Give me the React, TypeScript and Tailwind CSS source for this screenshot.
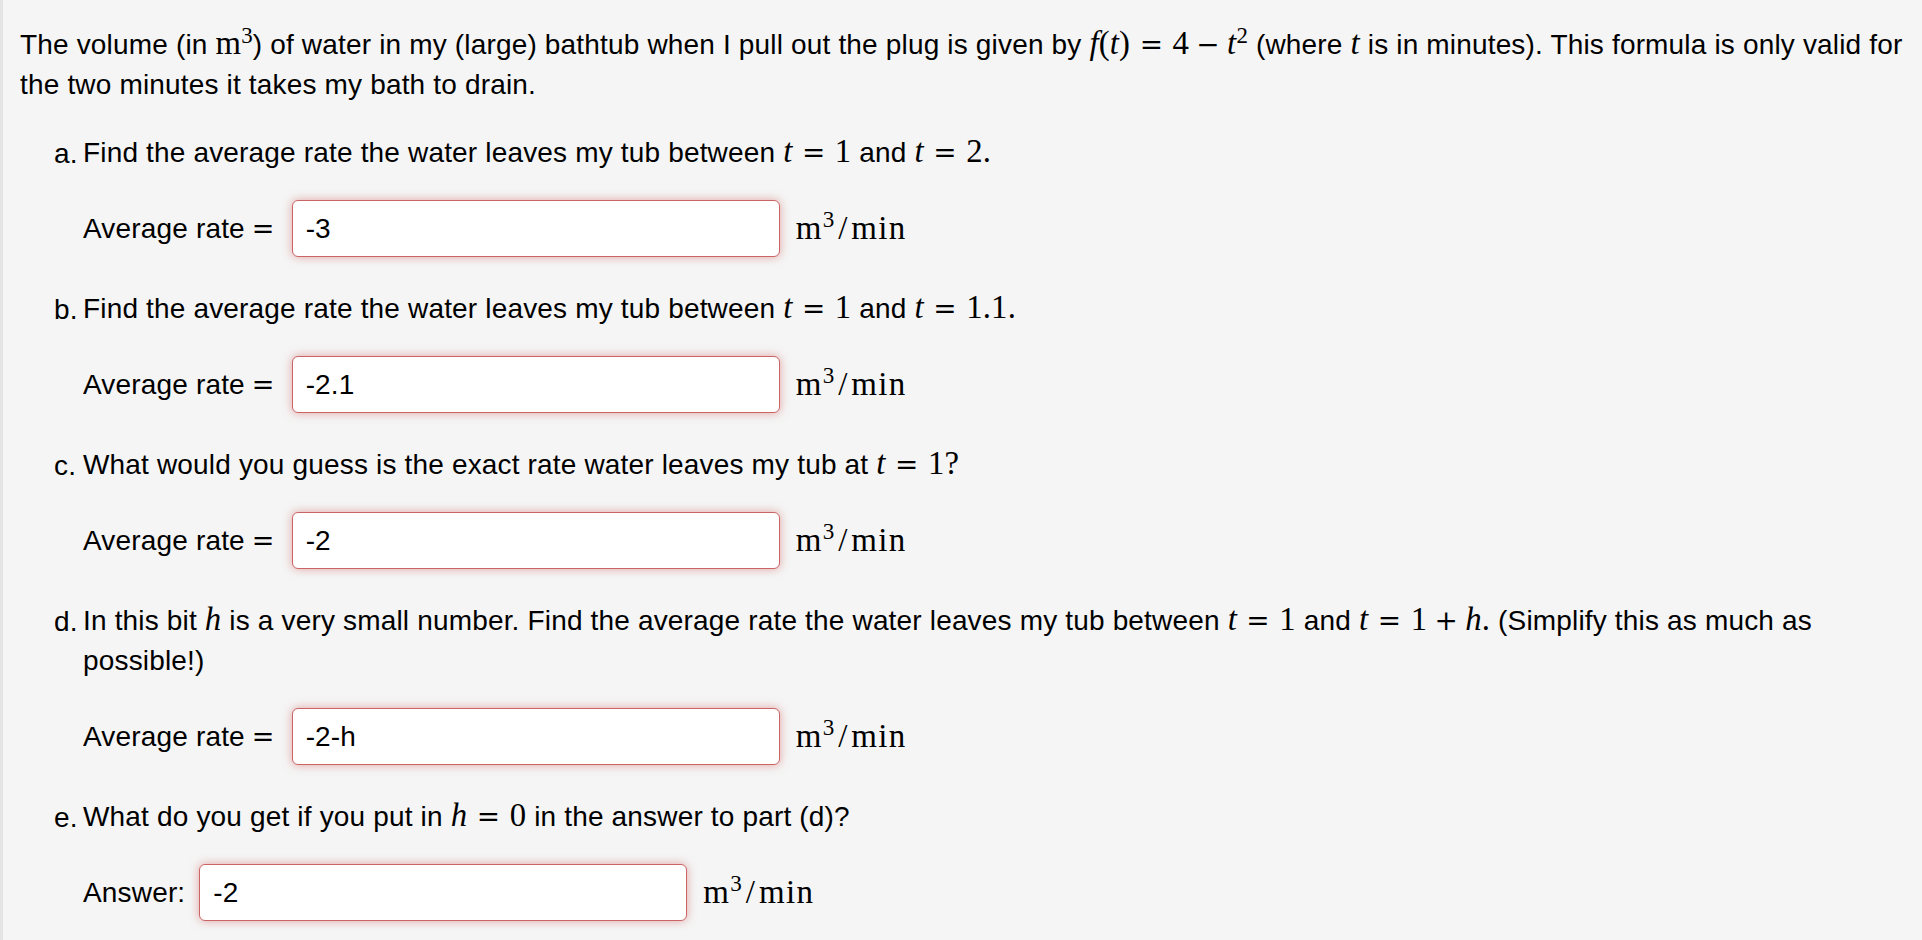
import React from 'react';

// math bits, rendered in a serif so they read like MathJax output
function M({ children }: { children: React.ReactNode }) {
  return <span className="font-['Liberation_Serif',serif] text-[1.17em] leading-none whitespace-nowrap">{children}</span>;
}

function V({ children }: { children: React.ReactNode }) {
  return <i className="italic">{children}</i>;
}

// relation / operator glyphs come from DejaVu Serif, whose = + − are as wide as the TeX ones
function Rel({ children }: { children: React.ReactNode }) {
  return <span className="mx-[0.34em] font-['DejaVu_Serif',serif] text-[0.85em]">{children}</span>;
}

function Op({ children }: { children: React.ReactNode }) {
  return <span className="mx-[0.26em] font-['DejaVu_Serif',serif] text-[0.85em]">{children}</span>;
}

function Sup({ children }: { children: React.ReactNode }) {
  return <sup className="relative top-[-0.5em] text-[0.7em]">{children}</sup>;
}

function Units() {
  return (
    <span className="ml-[16px] font-['Liberation_Serif',serif] text-[33px] tracking-[0.04em]">
      m<Sup>3</Sup>
      <span className="mx-[0.08em]">/</span>min
    </span>
  );
}

function AnswerRow({ label, value, eq = true }: { label: string; value: string; eq?: boolean }) {
  return (
    <div className="mt-[27px] flex h-[57px] items-center">
      <span className="flex items-center">
        {label}
        {eq && <span className="ml-[7px] font-['DejaVu_Serif',serif] text-[27px] leading-none">=</span>}
      </span>
      <input
        readOnly
        value={value}
        className={`${eq ? 'ml-[17px]' : 'ml-[14px]'} h-[57px] w-[488px] rounded-[6px] border border-[#cb6565] bg-white px-[13px] text-[28px] text-black shadow-[0_0_10px_rgba(205,80,80,0.5)] outline-none font-['Liberation_Sans',Arial,sans-serif]`}
      />
      <Units />
    </div>
  );
}

function Part({ mark, children, value, label = 'Average rate', eq = true }: {
  mark: string;
  children: React.ReactNode;
  value: string;
  label?: string;
  eq?: boolean;
}) {
  return (
    <li className="flex pb-[32px]">
      <span className="w-[29px] shrink-0">{mark}</span>
      <div className="flex-1">
        <div className="leading-[40px]">{children}</div>
        <AnswerRow label={label} value={value} eq={eq} />
      </div>
    </li>
  );
}

export default function App() {
  return (
    <div className="min-h-screen border-l-[3px] border-[#e4e4e4] bg-[#f5f5f5] pl-[17px] pr-[4px] pt-[25px] text-[28px] tracking-[0.006em] text-black font-['Liberation_Sans',Arial,sans-serif]">
      <p className="leading-[40px]">
        The volume (in{' '}
        <M>
          m<Sup>3</Sup>
        </M>
        ) of water in my (large) bathtub when I pull out the plug is given by{' '}
        <M>
          <V>f</V>(<V>t</V>)<Rel>=</Rel>4<Op>−</Op>
          <V>t</V>
          <Sup>2</Sup>
        </M>{' '}
        (where <M><V>t</V></M> is in minutes). This formula is only valid for the two minutes it takes my bath to drain.
      </p>

      <ol className="mt-[28px] pl-[34px]">
        <Part mark="a." value="-3">
          Find the average rate the water leaves my tub between{' '}
          <M>
            <V>t</V>
            <Rel>=</Rel>1
          </M>{' '}
          and{' '}
          <M>
            <V>t</V>
            <Rel>=</Rel>2.
          </M>
        </Part>
        <Part mark="b." value="-2.1">
          Find the average rate the water leaves my tub between{' '}
          <M>
            <V>t</V>
            <Rel>=</Rel>1
          </M>{' '}
          and{' '}
          <M>
            <V>t</V>
            <Rel>=</Rel>1.1.
          </M>
        </Part>
        <Part mark="c." value="-2">
          What would you guess is the exact rate water leaves my tub at{' '}
          <M>
            <V>t</V>
            <Rel>=</Rel>1?
          </M>
        </Part>
        <Part mark="d." value="-2-h">
          In this bit <M><V>h</V></M> is a very small number. Find the average rate the water leaves my tub between{' '}
          <M>
            <V>t</V>
            <Rel>=</Rel>1
          </M>{' '}
          and{' '}
          <M>
            <V>t</V>
            <Rel>=</Rel>1<Op>+</Op>
            <V>h</V>.
          </M>{' '}
          (Simplify this as much as possible!)
        </Part>
        <Part mark="e." value="-2" label="Answer:" eq={false}>
          What do you get if you put in{' '}
          <M>
            <V>h</V>
            <Rel>=</Rel>0
          </M>{' '}
          in the answer to part (d)?
        </Part>
      </ol>
    </div>
  );
}
